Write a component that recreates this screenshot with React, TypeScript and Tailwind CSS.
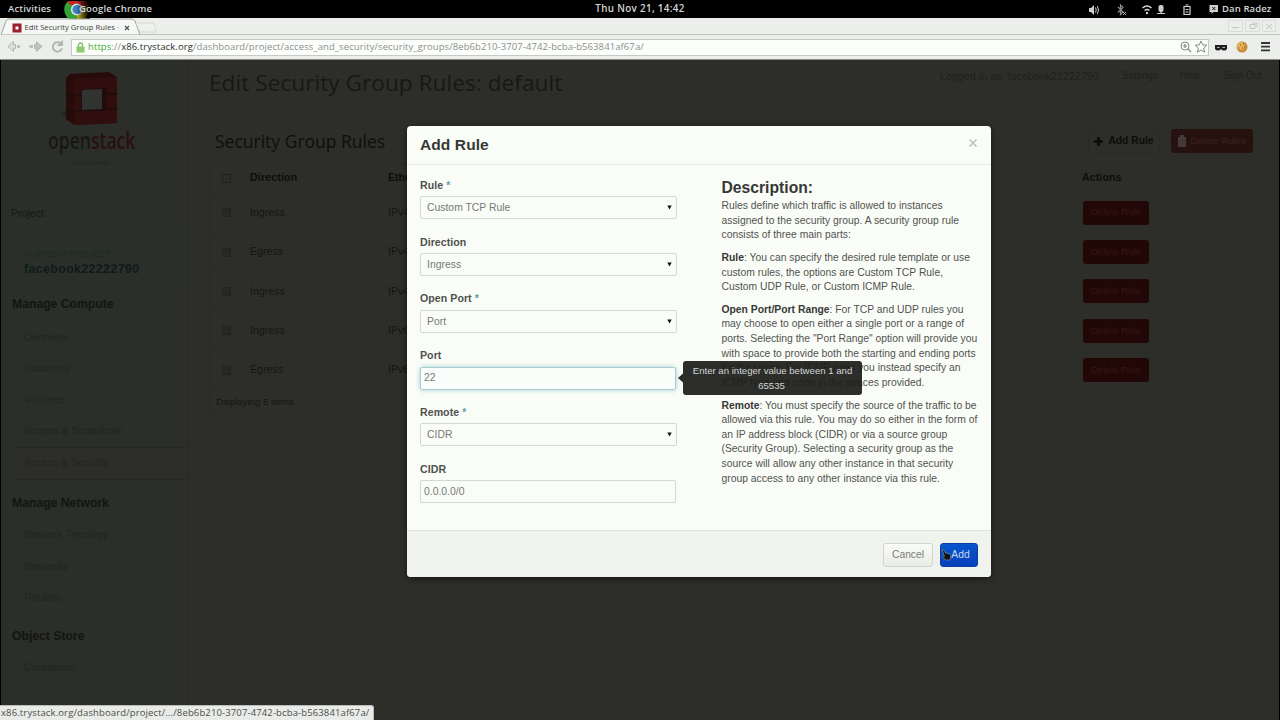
import type { ReactNode } from "react";

const navCompute = [
  { label: "Overview", active: false },
  { label: "Instances", active: false },
  { label: "Volumes", active: false },
  { label: "Images & Snapshots", active: false },
  { label: "Access & Security", active: true },
];
const navNetwork = ["Network Topology", "Networks", "Routers"];
const rules = [
  ["Ingress", "IPv4"],
  ["Egress", "IPv4"],
  ["Ingress", "IPv4"],
  ["Ingress", "IPv6"],
  ["Egress", "IPv6"],
];

function TopBar() {
  return (
    <div className="relative flex h-[18px] shrink-0 items-center bg-black pt-px font-['Open_Sans',sans-serif] text-[9.5px] font-semibold text-[#d6d6d6]">
      <span className="w-[56px] pl-2 tracking-[0.15px]">Activities</span>
      <div className="flex h-[18px] w-[120px] items-center overflow-hidden pl-2">
        <svg width="26" height="18" viewBox="0 0 26 18" className="shrink-0">
          <defs>
            <linearGradient id="fade" x1="0" x2="1">
              <stop offset="0.45" stopColor="#000" stopOpacity="0" />
              <stop offset="0.95" stopColor="#000" />
            </linearGradient>
          </defs>
          <circle cx="13" cy="8.5" r="12" fill="#d8c51f" />
          <path d="M13 8.5 3 2A12 12 0 0 1 24 3Z" fill="#c9231b" />
          <path d="M13 8.5 3 1A12 12 0 0 0 13 20.5Z" fill="#35a336" />
          <circle cx="13" cy="8.5" r="6" fill="#e3edf2" />
          <circle cx="13" cy="8.5" r="4.6" fill="#3f83c4" />
          <rect width="26" height="18" fill="url(#fade)" />
        </svg>
        <span className="-ml-[11px] tracking-[0.18px]">Google Chrome</span>
      </div>
      <span className="absolute inset-x-0 text-center text-[9.8px] tracking-[0.35px]">Thu Nov 21, 14:42</span>
      <div className="ml-auto flex items-center">
        <svg width="132" height="18" viewBox="1086 0 132 18" fill="#cfcfcf" stroke="none">
          <path d="M1089 7h2l3-3v10l-3-3h-2z" />
          <path d="M1095.5 6.500q1.500 2.500 0 5M1097.300 5q2.500 4 0 8" fill="none" stroke="#cfcfcf" />
          <path d="M1118 6l5 5-2.500 2.500V4l2.500 2.500-5 5" fill="none" stroke="#8c8c8c" strokeWidth="1.200" />
          <path d="M1123 11l3 3m0-3-3 3" stroke="#a9a9a9" />
          <path d="M1142.500 7q4.500-4 9 0M1144.500 9.500q2.500-2 5 0" fill="none" stroke="#cfcfcf" strokeWidth="1.400" />
          <circle cx="1147" cy="12" r="1.200" />
          <path d="M1157 12.500h8M1161 10v2" stroke="#cfcfcf" strokeWidth="1.200" />
          <rect x="1158.500" y="4" width="5" height="7" rx="2" />
          <path d="M1184 5.500h6v8h-6zM1185.500 4h3M1185.500 8.500h3M1185.500 11h3" fill="none" stroke="#cfcfcf" strokeWidth="1.200" />
          <path d="M1209.500 4h8.500v7h-4.500l-2 2v-2h-2z" />
          <path d="M1212.300 6l3 3m0-3-3 3" stroke="#111" />
        </svg>
        <span className="w-[62px] pl-1 tracking-[0.1px]">Dan Radez</span>
      </div>
    </div>
  );
}

function BrowserChrome() {
  return (
    <div className="flex h-[42px] shrink-0 flex-col border-b border-[#8c8d8a] bg-[#ebeeea] pl-px">
      <div className="relative h-[17px] border-b border-[#bfc2be]">
        <svg width="170" height="17" viewBox="0 0 170 17" className="absolute left-0 top-0">
          <path d="M0 17 5 3Q6 1 8 1H130Q133 1 134 3L139 17Z" fill="#f5f7f4" stroke="#9fa29e" />
          <path d="M135 5H151Q153 5 154 8L155 14H141Q139 14 138 12Z" fill="#eff1ed" stroke="#d6d9d4" />
          <path d="m124 8 4 4m0-4-4 4" stroke="#555" strokeWidth="1.200" />
          <rect x="11.500" y="5.500" width="9" height="9" fill="#9c1e2c" />
          <rect x="14.500" y="8.500" width="3" height="3" fill="#fff" />
        </svg>
        <span className="absolute left-[23.5px] top-[4px] font-['Open_Sans',sans-serif] text-[7.7px] leading-[11px] text-[#3e3f3d]">
          Edit Security Group Rules ·
        </span>
        <div className="absolute right-1 top-[2px] flex h-[12px]">
          <svg width="48" height="12" fill="none" stroke="#c3c6c2">
            <path d="M.5.5h14v11H.5zM17.500.5h14v11h-14zM34.500.5h13v11h-13z" stroke="#d9dcd8" />
            <path d="M4 7.500h7M22 4.500h5v4h-5zM24 3h5v4M38 4l6 5m0-5-6 5" />
          </svg>
        </div>
      </div>
      <div className="flex flex-1 items-center pl-[6px]">
        <svg width="64" height="18" viewBox="0 0 64 18" fill="none" stroke="#b4b7b3">
          <path d="M1 8.500l5.500-5v3h2v4h-2v3z" fill="#dcdfda" />
          <path d="M10 8.500h3" strokeWidth="2.500" />
          <path d="M35 8.500l-5.500-5v3h-2v4h2v3z" fill="#bfc2be" />
          <path d="M22.500 8.500h3.500" strokeWidth="2.500" />
          <path d="M53.500 5.300a4.700 4.700 0 1 0 1.500 5" strokeWidth="2" />
          <path d="M55.500 2.500v5h-5z" fill="#b3b6b2" />
        </svg>
        <div className="flex h-[17px] w-[1138px] items-center border border-[#c6c9c5] bg-[#fcfefb] pl-1">
          <svg width="9" height="11" viewBox="0 0 9 11">
            <path d="M2.500 5V3a2 2 0 0 1 4 0v2" fill="none" stroke="#7cba62" strokeWidth="1.300" />
            <rect x=".5" y="4.500" width="8" height="6" fill="#8fca70" />
          </svg>
          <span className="relative top-[0.5px] ml-[3px] font-['Open_Sans',sans-serif] text-[9.5px] tracking-[0.09px] text-[#8d8f8c]">
            <span className="text-[#3eab35]">https</span>://<span className="text-[#2c2d2b]">x86.trystack.org</span>
            /dashboard/project/access_and_security/security_groups/8eb6b210-3707-4742-bcba-b563841af67a/
          </span>
          <svg width="28" height="14" viewBox="0 0 28 14" className="ml-auto" fill="none" stroke="#858784">
            <circle cx="5" cy="6" r="4" />
            <path d="M8 9l3 3M3 6h4M5 4v4" strokeWidth="1.200" />
            <path d="m21 1 1.700 3.800 4.100.4-3.100 2.800.9 4.200-3.600-2.200-3.600 2.200.9-4.200-3.100-2.800 4.100-.4z" />
          </svg>
        </div>
        <svg width="60" height="16" viewBox="0 0 60 16" className="ml-[4px]">
          <path d="M2 6h12v4q-1 1.500-3 1.500T8 10q-1 1.500-3 1.500T2 10z" fill="#1e1f1e" />
          <path d="M4 8.500h2.500M9.500 8.500h2.500" stroke="#bbb" />
          <circle cx="29" cy="8" r="5.500" fill="#c98b35" />
          <circle cx="28" cy="7" r="3.800" fill="#e5b35b" />
          <path d="M27 6h1M30 5h1M29 9h1M31 8h1M26 9h1" stroke="#8a5a22" />
          <path d="M48 4h9M48 7.700h9M48 11.400h9" stroke="#343534" strokeWidth="1.800" />
        </svg>
      </div>
    </div>
  );
}

function NavItem({ children, active = false }: { children: ReactNode; active?: boolean }) {
  return (
    <div
      className={
        active
          ? "-ml-[7px] flex h-[33px] items-center border-y border-[#242823] bg-[#2d2e2a] pl-[7px]"
          : "flex h-[31.2px] items-center"
      }
    >
      {children}
    </div>
  );
}

function Sidebar() {
  return (
    <aside className="flex w-[187px] shrink-0 flex-col border-r border-[#282a26] bg-[#2b2e29] text-[10.6px] text-[#222521]">
      <div className="flex h-[110px] flex-col items-center pr-[5px] pt-[10px]">
        <svg width="66" height="56" viewBox="0 0 66 56">
          <path d="M2 44l9-5v10z" fill="#222420" />
          <path d="M7 8 11 4 50 2 58 7v46L15 55 7 49z" fill="#260b0a" />
          <path d="M15 8 58 7v46L15 55z" fill="#300e0d" />
          <path d="M15 25H23M43 24H58M15 41 58 39M7 24l8 3M7 40l8 3" stroke="#1d0c0a" strokeWidth="1.500" />
          <path d="M22 20 48 18v22L22 40z" fill="#200c0a" />
          <path d="M23 20 43 19v20L23 40z" fill="#30332f" />
        </svg>
        <div className="-mt-[2px] h-[35px] scale-x-[0.73] whitespace-nowrap font-['Open_Sans',sans-serif] text-[24px] font-semibold leading-[32px] text-[#171815]">
          open<span className="text-[#29100e]">stack</span>
        </div>
        <div className="text-[5.6px] leading-[8px] tracking-[0.2px]">DASHBOARD</div>
      </div>
      <div className="h-[59px] pl-[10px] pt-[36px] text-[#171916]">
        Project
        <div className="ml-[62px] mt-[7px] h-px bg-[#262824]" />
      </div>
      <div className="flex h-[57px] flex-col bg-[#2a2f2a] pl-[23px] pt-[18.500px]">
        <span className="text-[9px] leading-[13px] tracking-[-0.1px] text-[#1d2926]">CURRENT PROJECT</span>
        <span className="text-[12.3px] font-bold leading-[16px] tracking-[0.42px] text-[#0d1b19]">facebook22222790</span>
      </div>
      <h4 className="flex h-[36px] items-center pl-[11px] text-[12.2px] font-bold text-[#131512]">Manage Compute</h4>
      <div className="pl-[23px]">
        {navCompute.map((item) => (
          <NavItem key={item.label} active={item.active}>{item.label}</NavItem>
        ))}
      </div>
      <h4 className="flex h-[47px] items-center pl-[11px] text-[12.2px] font-bold text-[#131512]">Manage Network</h4>
      <div className="-mt-[7px] pl-[23px]">
        {navNetwork.map((label) => (
          <NavItem key={label}>{label}</NavItem>
        ))}
      </div>
      <h4 className="flex h-[46px] items-center pl-[11px] text-[12.2px] font-bold text-[#131512]">Object Store</h4>
      <div className="-mt-[7px] pl-[23px]">
        <NavItem>Containers</NavItem>
      </div>
    </aside>
  );
}

function RulesTable() {
  return (
    <div className="mt-[6px] w-[1050px] border border-[#292a26] text-[10.6px] text-[#141512]">
      <div className="flex h-[28.500px] items-center font-bold text-[#0c0d0b]">
        <span className="ml-[12px] size-[9px] border border-[#20211e]" />
        <span className="ml-[19px] w-[138px] tracking-[0.15px]">Direction</span>
        <span className="w-[694px]">Ether Type</span>
        <span className="tracking-[0.1px]">Actions</span>
      </div>
      {rules.map(([direction, type], i) => (
        <div key={i} className="flex h-[39.4px] items-center border-t border-[#2a2b27]">
          <span className="ml-[12px] size-[9px] border border-[#22231f] bg-[#272824]" />
          <span className="ml-[19px] w-[138px]">{direction}</span>
          <span className="w-[695px]">{type}</span>
          <span className="flex h-[24px] w-[66px] items-center justify-center rounded-[3px] bg-[#210706] text-[9.6px] text-[#351614]">
            Delete Rule
          </span>
        </div>
      ))}
      <div className="flex h-[25px] items-center border-t border-[#2a2b27] pl-[6px] text-[9.6px]">Displaying 5 items</div>
    </div>
  );
}

function Content() {
  return (
    <main className="flex flex-1 flex-col pl-[21px] pt-[3px]">
      <div className="flex h-[48px] items-start">
        <h1 className="font-['Open_Sans',sans-serif] text-[22.7px] leading-[40px] text-[#171815]">Edit Security Group Rules: default</h1>
        <div className="ml-auto flex pt-[6px] text-[10.6px] leading-[14px] text-[#1f201d]">
          <span className="w-[182px] tracking-[0.07px]">Logged in as: facebook22222790</span>
          <span className="w-[58px] text-[10px]">Settings</span>
          <span className="w-[43px] text-[10px]">Help</span>
          <span className="w-[56px] text-[10px]">Sign Out</span>
        </div>
      </div>
      <div className="mt-[14px] flex h-[32px] items-center pl-[6px]">
        <h2 className="font-['Open_Sans',sans-serif] text-[17.5px] text-[#0d0e0c]">Security Group Rules</h2>
        <div className="ml-auto mr-[26px] flex gap-[11px]">
          <div className="flex h-[24px] w-[72px] items-center justify-center gap-[5px] rounded-[3px] border border-[#292a26] text-[10.3px] font-bold text-[#0b0c0a]">
            <svg width="9" height="9">
              <path d="M4.500 0v9M0 4.500h9" stroke="#0b0c0a" strokeWidth="2.600" />
            </svg>
            Add Rule
          </div>
          <div className="flex h-[24px] w-[82px] items-center justify-center gap-[4px] rounded-[3px] bg-[#25120e] text-[9.7px] text-[#3a221d]">
            <svg width="8" height="12" fill="#453b36">
              <path d="M0 2h8v10H0zM2 0h4v2H2z" />
            </svg>
            Delete Rules
          </div>
        </div>
      </div>
      <RulesTable />
    </main>
  );
}

function Field({ label, required = false, children }: { label: string; required?: boolean; children: ReactNode }) {
  return (
    <div className="flex h-[56.8px] flex-col">
      <label className="h-[19.5px] text-[10.6px] font-bold leading-[16px] tracking-[0.05px] text-[#4f514e]">
        {label}
        {required && <span className="ml-[3px] text-[#6c9ba3]">*</span>}
      </label>
      {children}
    </div>
  );
}

function Select({ value }: { value: string }) {
  return (
    <div className="flex h-[23px] w-[257px] items-center justify-between rounded-[2px] border border-[#d3d8d2] pl-[6px] pr-[4px] text-[10.4px] text-[#777976]">
      {value}
      <svg width="5" height="5">
        <path d="M.3.500h4.400L2.500 4.500z" fill="#111" />
      </svg>
    </div>
  );
}

function AddRuleDialog() {
  return (
    <section className="absolute left-[407px] top-[126px] flex h-[451px] w-[584px] flex-col overflow-hidden rounded-[4px] bg-[#fafdf7] shadow-[0_2px_6px_rgba(0,0,0,0.5)]">
      <header className="flex h-[39px] items-center justify-between border-b border-[#e8ebe6] pl-[13px] pr-[13px]">
        <h3 className="text-[15.5px] font-bold tracking-[0.1px] text-[#363835]">Add Rule</h3>
        <svg width="10" height="10" className="mb-[4px]">
          <path d="m1.500 1.500 7 7m0-7-7 7" stroke="#bfc3bd" strokeWidth="1.700" />
        </svg>
      </header>
      <div className="flex h-[365px]">
        <form className="w-[314.5px] pl-[13px] pt-[11.800px]">
          <Field label="Rule" required><Select value="Custom TCP Rule" /></Field>
          <Field label="Direction"><Select value="Ingress" /></Field>
          <Field label="Open Port" required><Select value="Port" /></Field>
          <Field label="Port">
            <div className="flex h-[23px] w-[256px] items-center rounded-[2px] border border-[#a9cbd2] bg-[#fafdf9] pl-[3px] text-[10.4px] text-[#777976] shadow-[0_0_5px_rgba(110,180,195,0.6)]">22</div>
          </Field>
          <Field label="Remote" required><Select value="CIDR" /></Field>
          <Field label="CIDR">
            <div className="flex h-[23px] w-[256px] items-center rounded-[2px] border border-[#d3d8d2] pl-[3px] text-[10.4px] text-[#777976]">0.0.0.0/0</div>
          </Field>
        </form>
        <div className="whitespace-nowrap pt-[11.5px] text-[10.35px] leading-[14.62px] text-[#50524f] [&_b]:text-[#363835] [&_p]:mb-[8px]">
          <h3 className="mb-[0.5px] text-[15.7px] font-bold leading-[22px] text-[#363835]">Description:</h3>
          <p>Rules define which traffic is allowed to instances<br />assigned to the security group. A security group rule<br />consists of three main parts:</p>
          <p><b>Rule</b>: You can specify the desired rule template or use<br />custom rules, the options are Custom TCP Rule,<br />Custom UDP Rule, or Custom ICMP Rule.</p>
          <p><b>Open Port/Port Range</b>: For TCP and UDP rules you<br />may choose to open either a single port or a range of<br />ports. Selecting the "Port Range" option will provide you<br />with space to provide both the starting and ending ports<br />for the range. For ICMP rules you instead specify an<br />ICMP type and code in the spaces provided.</p>
          <p><b>Remote</b>: You must specify the source of the traffic to be<br />allowed via this rule. You may do so either in the form of<br />an IP address block (CIDR) or via a source group<br />(Security Group). Selecting a security group as the<br />source will allow any other instance in that security<br />group access to any other instance via this rule.</p>
        </div>
      </div>
      <footer className="flex flex-1 items-center justify-end gap-[7px] border-t border-[#dde1db] bg-[#eff2ed] pr-[13px] pt-px text-[10.3px]">
        <button className="h-[24px] w-[50px] rounded-[3px] border border-[#d0d3ce] bg-linear-to-b from-[#fafcf8] to-[#e8ebe6] text-[#7b7e79]">Cancel</button>
        <button className="h-[24px] w-[38px] rounded-[3px] border border-[#0a3ea5] bg-linear-to-b from-[#0a55cc] to-[#0740bb] pl-[3px] text-[#c6d8f4]">Add</button>
      </footer>
    </section>
  );
}

export default function App() {
  return (
    <div className="relative flex h-[720px] w-[1280px] flex-col overflow-hidden bg-black font-['Liberation_Sans',sans-serif]">
      <TopBar />
      <BrowserChrome />
      <div className="mx-px flex flex-1 bg-[#2d2e2a]">
        <Sidebar />
        <Content />
      </div>
      <AddRuleDialog />
      <div className="absolute left-[678px] top-[361px] flex items-center">
        <svg width="5" height="10">
          <path d="M0 5l5-4.500v9z" fill="#292b28" />
        </svg>
        <div className="flex h-[34px] w-[179px] flex-col items-center rounded-[3px] bg-[#1b1c1a]/92 pt-[3px] text-[9.6px] leading-[14.5px] text-[#d4d6d2]">
          <span>Enter an integer value between 1 and</span>
          <span className="-ml-[2px]">65535</span>
        </div>
      </div>
      <svg width="12" height="12" viewBox="0 0 12 12" className="absolute left-[941px] top-[549px]">
        <path d="M1 .8q1-.8 2 .7L4.500 4 9 5q1 .3.800 2L9 11H4.500L1.500 7.500l1-.7 1 .5z" fill="#111" stroke="#8b9cb8" strokeWidth=".6" />
      </svg>
      <div className="absolute bottom-0 left-0 flex h-[15px] w-[374px] items-center rounded-tr-[3px] border-r border-t border-[#b9bbb8] bg-[#e9ebe8] pl-px pt-px font-['Open_Sans',sans-serif] text-[9.5px] tracking-[0.13px] text-[#4c4e4b]">
        x86.trystack.org/dashboard/project/.../8eb6b210-3707-4742-bcba-b563841af67a/
      </div>
    </div>
  );
}
